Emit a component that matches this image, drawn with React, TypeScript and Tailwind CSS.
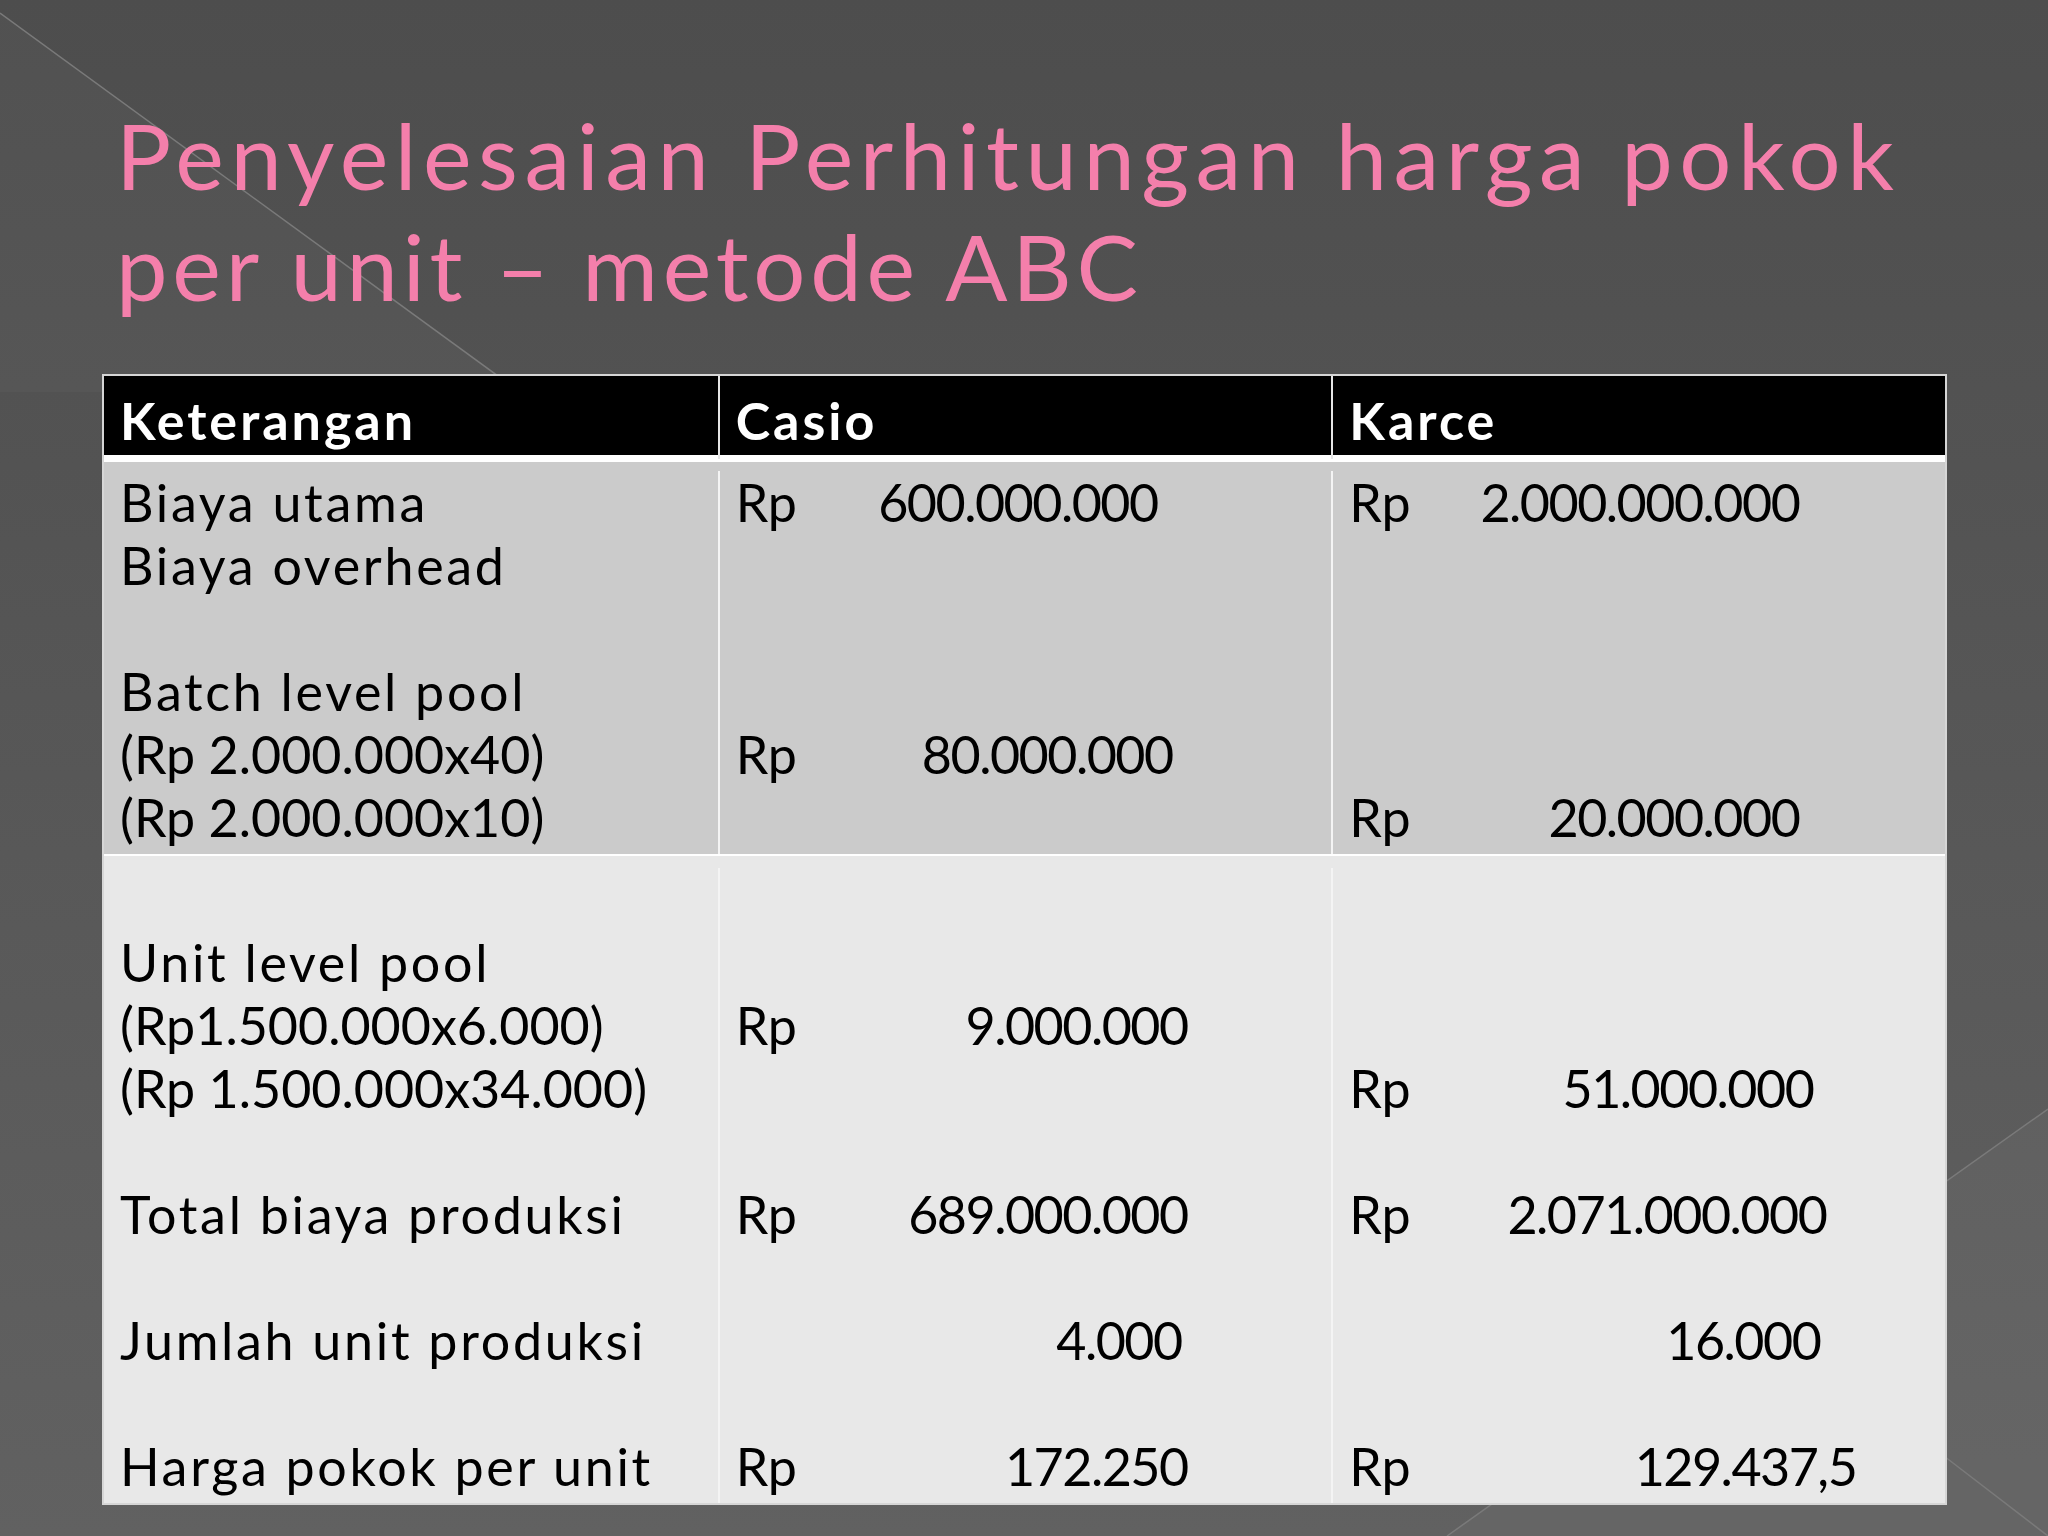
import React from "react";

type Val = { line: number; rp: boolean; num: string; w: string };

const row1Labels = [
  "Biaya utama",
  "Biaya overhead",
  "",
  "Batch level pool",
  "(Rp 2.000.000x40)",
  "(Rp 2.000.000x10)",
];

const row2Labels = [
  "",
  "Unit level pool",
  "(Rp1.500.000x6.000)",
  "(Rp 1.500.000x34.000)",
  "",
  "Total biaya produksi",
  "",
  "Jumlah unit produksi",
  "",
  "Harga pokok per unit",
];

const row1Casio: Val[] = [
  { line: 0, rp: true, num: "600.000.000", w: "w-[422px]" },
  { line: 4, rp: true, num: "80.000.000", w: "w-[437px]" },
];
const row1Karce: Val[] = [
  { line: 0, rp: true, num: "2.000.000.000", w: "w-[450px]" },
  { line: 5, rp: true, num: "20.000.000", w: "w-[450px]" },
];
const row2Casio: Val[] = [
  { line: 2, rp: true, num: "9.000.000", w: "w-[452px]" },
  { line: 5, rp: true, num: "689.000.000", w: "w-[452px]" },
  { line: 7, rp: false, num: "4.000", w: "w-[446px]" },
  { line: 9, rp: true, num: "172.250", w: "w-[452px]" },
];
const row2Karce: Val[] = [
  { line: 3, rp: true, num: "51.000.000", w: "w-[464px]" },
  { line: 5, rp: true, num: "2.071.000.000", w: "w-[477px]" },
  { line: 7, rp: false, num: "16.000", w: "w-[471px]" },
  { line: 9, rp: true, num: "129.437,5", w: "w-[507px]" },
];

const LabelCell = ({ lines }: { lines: string[] }) => (
  <div className="pl-[16px]">
    {lines.map((t, i) => (
      <div
        key={i}
        className={`h-[63px] whitespace-nowrap leading-[63px] ${
          t.startsWith("(") ? "tracking-normal" : "tracking-[2.7px]"
        }`}
      >
        {t}
      </div>
    ))}
  </div>
);

const ValueCell = ({ count, vals }: { count: number; vals: Val[] }) => (
  <div className="border-l-2 border-[#f4f4f4] pl-[16px]">
    {Array.from({ length: count }).map((_, i) => {
      const v = vals.find((x) => x.line === i);
      if (!v) return <div key={i} className="h-[63px]" />;
      return (
        <div
          key={i}
          className={`flex h-[63px] leading-[63px] ${v.w} ${
            v.rp ? "justify-between" : "justify-end"
          }`}
        >
          {v.rp && <span>Rp</span>}
          <span className="tracking-[-1.5px]">{v.num}</span>
        </div>
      );
    })}
  </div>
);

export default function App() {
  return (
    <div className="relative h-[1536px] w-[2048px] overflow-hidden bg-linear-to-b from-[#4d4d4d] to-[#616161] [font-family:Lato,'Liberation_Sans',sans-serif]">
      <svg
        className="absolute inset-0"
        width="2048"
        height="1536"
        viewBox="0 0 2048 1536"
      >
        <polygon points="0,13 520,392 0,392" fill="#ffffff" fillOpacity="0.025" />
        <polygon points="2048,1109 1447,1536 2048,1536" fill="#ffffff" fillOpacity="0.03" />
        <line x1="0" y1="13" x2="520" y2="392" stroke="#7a7a7a" strokeWidth="1.5" />
        <line x1="2048" y1="1109" x2="1447" y2="1536" stroke="#7a7a7a" strokeWidth="1.5" />
        <line x1="1940" y1="1453" x2="2048" y2="1536" stroke="#7a7a7a" strokeWidth="1.5" />
      </svg>

      <div className="relative pl-[102px] pt-[99px]">
        <h1 className="ml-[14px] whitespace-nowrap text-[92px] font-normal leading-[111px] tracking-[6.5px] text-[#f47fab]">
          Penyelesaian Perhitungan harga pokok
          <br />
          <span className="tracking-[4.8px]">per unit – metode ABC</span>
        </h1>

        <div className="mt-[53px] w-[1845px] border-2 border-[#d6d6d6] text-[52px] text-black">
          <div className="grid h-[86px] grid-cols-3 border-b-[7px] border-white bg-black font-bold text-white">
            <div className="flex items-center pl-[16px] pt-[5px] tracking-[3px]">Keterangan</div>
            <div className="flex items-center border-l-2 border-[#e6e6e6] pl-[16px] pt-[5px] tracking-[3px]">
              Casio
            </div>
            <div className="flex items-center border-l-2 border-[#e6e6e6] pl-[16px] pt-[5px] tracking-[3px]">
              Karce
            </div>
          </div>

          <div className="grid h-[394px] grid-cols-3 border-b-2 border-white bg-[#cbcbcb] pt-[9px]">
            <LabelCell lines={row1Labels} />
            <ValueCell count={6} vals={row1Casio} />
            <ValueCell count={6} vals={row1Karce} />
          </div>

          <div className="grid h-[647px] grid-cols-3 bg-[#e8e8e8] pt-[12px]">
            <LabelCell lines={row2Labels} />
            <ValueCell count={10} vals={row2Casio} />
            <ValueCell count={10} vals={row2Karce} />
          </div>
        </div>
      </div>
    </div>
  );
}
